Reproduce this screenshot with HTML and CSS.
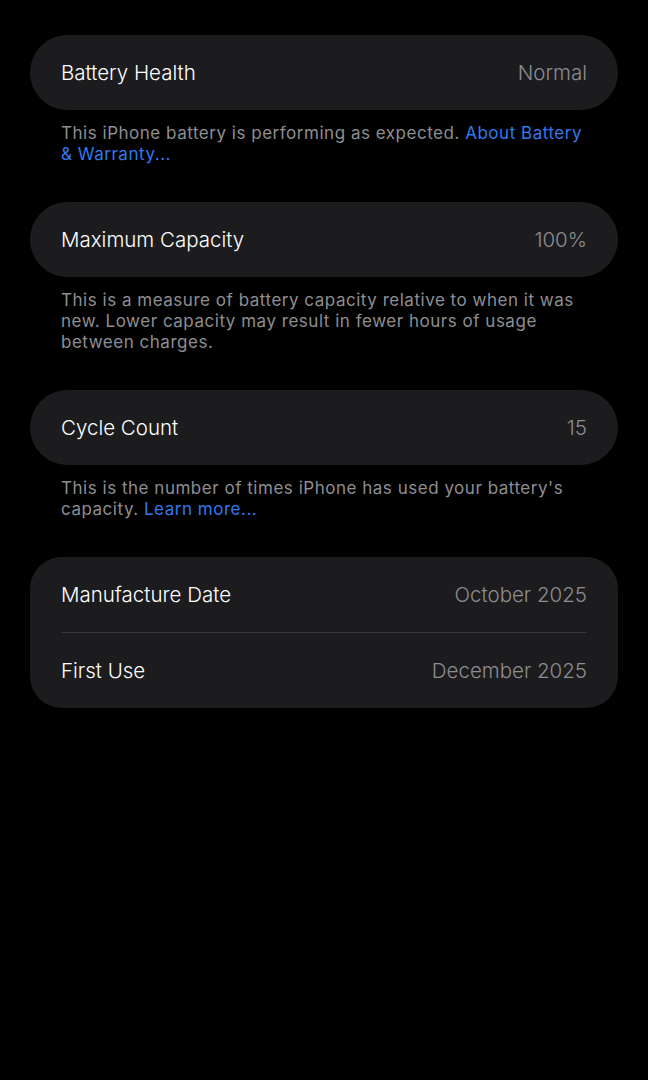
FILE: index.html
```html
<!DOCTYPE html>
<html lang="en">
<head>
  <meta charset="UTF-8">
  <meta name="viewport" content="width=device-width, initial-scale=1.0">
  <title>Battery Health</title>
  <link rel="stylesheet" href="styles.css">
</head>
<body>
  <div class="group">
    <div class="card pill">
      <div class="row">
        <span class="label">Battery Health</span>
        <span class="value">Normal</span>
      </div>
    </div>
    <p class="footer">This iPhone battery is performing as expected. <a href="#">About Battery &amp; Warranty...</a></p>
  </div>

  <div class="group">
    <div class="card pill">
      <div class="row">
        <span class="label">Maximum Capacity</span>
        <span class="value">100%</span>
      </div>
    </div>
    <p class="footer">This is a measure of battery capacity relative to when it was new. Lower capacity may result in fewer hours of usage between charges.</p>
  </div>

  <div class="group">
    <div class="card pill">
      <div class="row">
        <span class="label">Cycle Count</span>
        <span class="value">15</span>
      </div>
    </div>
    <p class="footer">This is the number of times iPhone has used your battery's capacity. <a href="#">Learn more...</a></p>
  </div>

  <div class="group">
    <div class="card">
      <div class="row">
        <span class="label">Manufacture Date</span>
        <span class="value">October 2025</span>
      </div>
      <div class="divider"></div>
      <div class="row">
        <span class="label">First Use</span>
        <span class="value">December 2025</span>
      </div>
    </div>
  </div>
</body>
</html>
```

FILE: styles.css
```css
body {
  margin: 0;
  padding: 35px 30px 0;
  background-color: #000;
  color: #fff;
  font-family: Inter, "Noto Sans", sans-serif;
}

.group {
  margin-bottom: 37px;
}

.card {
  background-color: #1c1c1e;
  border-radius: 32px;
  padding: 0 31px;
}

.card.pill {
  border-radius: 38px;
}

.row {
  display: flex;
  justify-content: space-between;
  align-items: center;
  height: 75px;
  font-size: 20.5px;
  font-weight: 350;
}

.label {
  color: #fff;
}

.value {
  color: #8d8d93;
}

.divider {
  height: 1px;
  background-color: #38383a;
}

.footer {
  margin: 0;
  padding: 13px 31px 0;
  font-size: 17px;
  line-height: 21px;
  letter-spacing: 0.52px;
  font-weight: 370;
  color: #8e8e93;
}

.footer a {
  color: #3179ee;
  text-decoration: none;
}
```
